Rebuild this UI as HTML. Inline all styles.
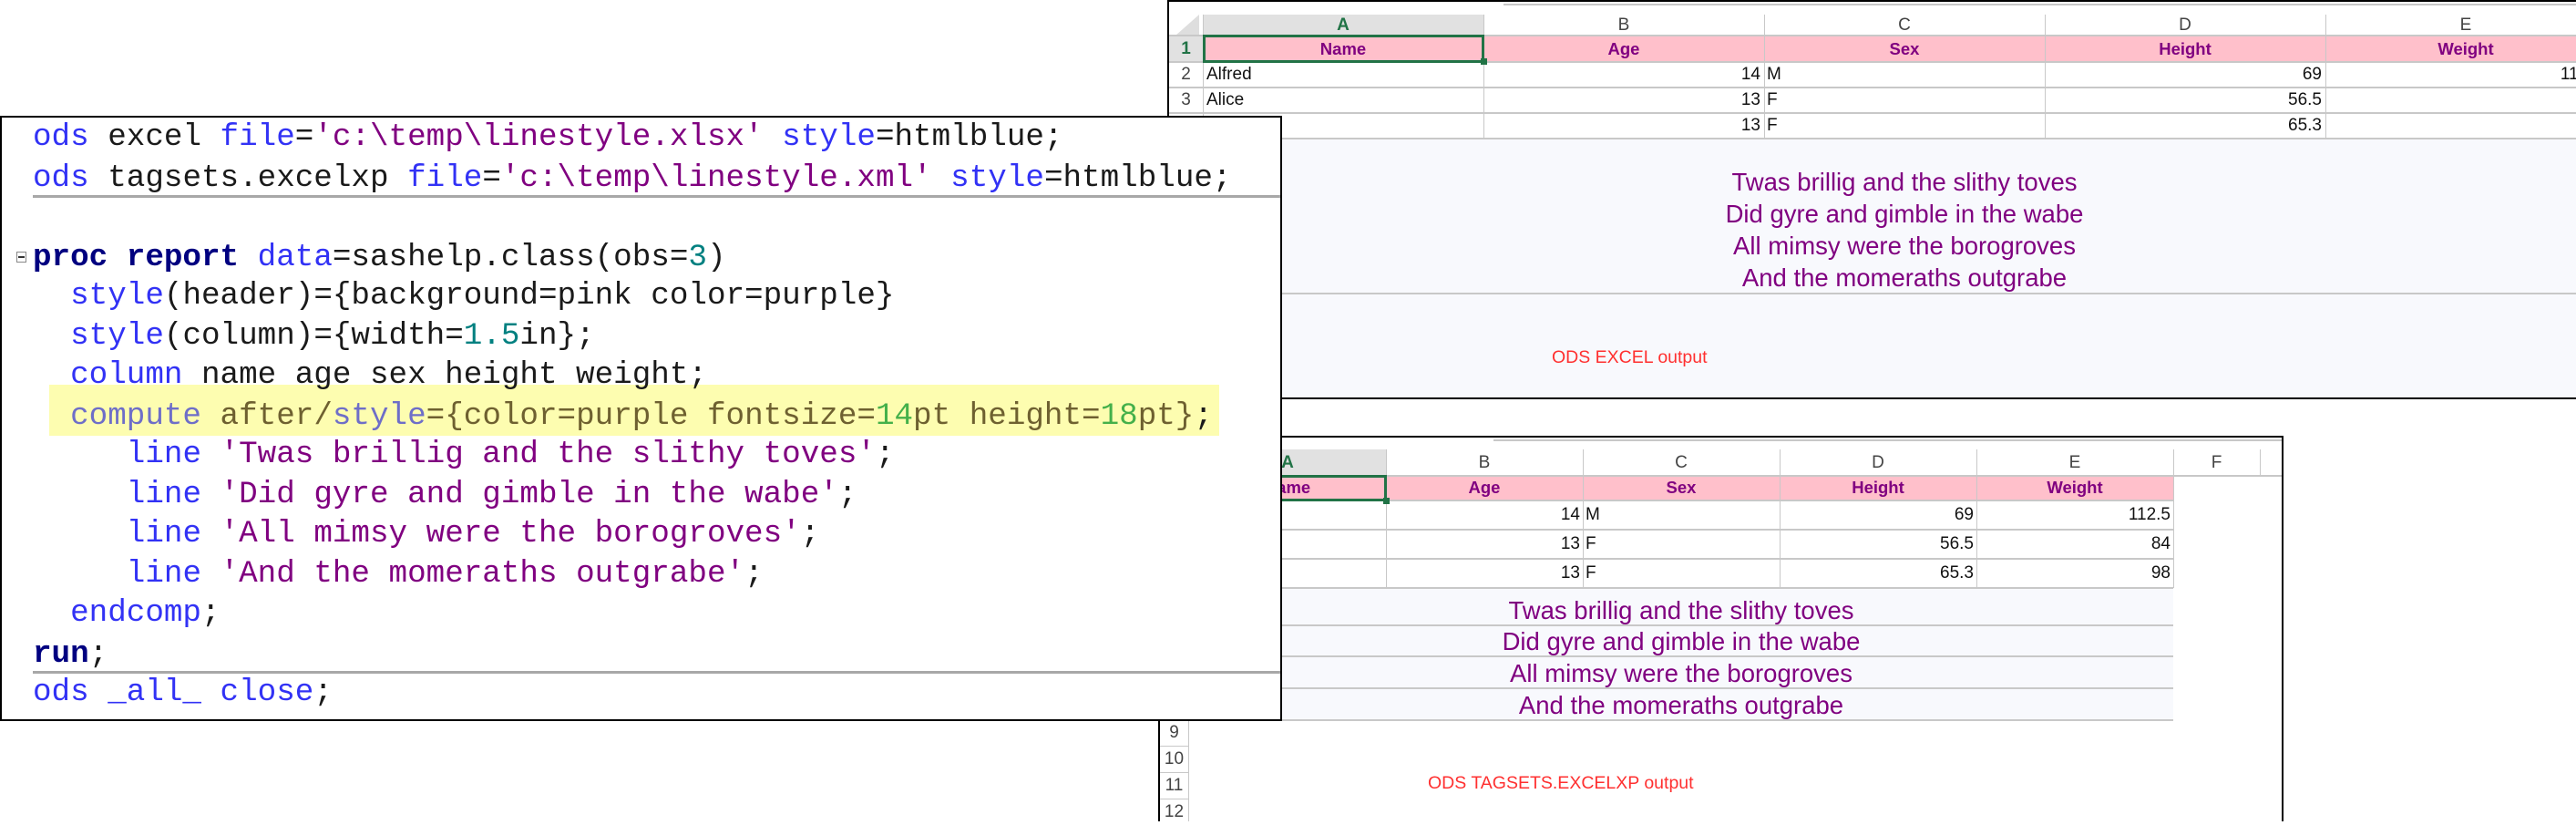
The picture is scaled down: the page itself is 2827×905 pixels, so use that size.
<!DOCTYPE html>
<html><head><meta charset="utf-8"><style>
*{margin:0;padding:0;box-sizing:border-box}
body{width:2827px;height:901px;background:#fff;position:relative;overflow:hidden;font-family:"Liberation Sans",Arial,sans-serif}
.a{position:absolute}
.code{position:absolute;left:0;top:127px;width:1407px;height:664px;border:2px solid #000;background:#fff;z-index:5}
.ln{position:absolute;left:34px;height:44px;line-height:44px;font-family:"Liberation Mono",monospace;font-size:34.25px;color:#1a1a1a;white-space:pre}
.k{color:#3232f5}.s{color:#800080}.n{color:#008080}.b{color:#000080;font-weight:bold}
.hk{color:#6e6ec8}.hb{color:#6e6030}.hn{color:#44b04a}
.sep{position:absolute;left:34px;right:0;height:3px;background:#a8a8a8}
.t{position:absolute;font-size:19px;line-height:28px;white-space:nowrap;color:#111}
.hd{font-weight:bold;color:#800080;text-align:center;font-size:18.5px}
.poem{position:absolute;font-size:27.5px;line-height:32px;color:#800080;text-align:center;white-space:nowrap}
.vl{position:absolute;width:1px;background:#c8c8c8}
.hl{position:absolute;height:2px;background:#c8c8c8}
.cl{position:absolute;font-size:19px;color:#444;text-align:center;line-height:23px}
</style></head><body>

<!-- TOP EXCEL -->
<div class="a" style="left:1281px;top:0;width:1546px;height:438px;border-left:2px solid #000;border-top:2px solid #000;border-bottom:2px solid #000;background:#fff"></div>
<div class="a" style="left:1650px;top:4px;width:1177px;height:2px;background:#c8c8c8"></div>
<div class="a" style="left:1290px;top:16px;width:0;height:0;border-left:26px solid transparent;border-bottom:23px solid #dedede"></div>
<div class="a" style="left:1320px;top:16px;width:308px;height:23px;background:#e1e1e1"></div>
<div class="cl" style="left:1320px;top:16px;width:308px;color:#217346;font-weight:bold">A</div>
<div class="cl" style="left:1628px;top:16px;width:308px">B</div>
<div class="cl" style="left:1936px;top:16px;width:308px">C</div>
<div class="cl" style="left:2244px;top:16px;width:308px">D</div>
<div class="cl" style="left:2552px;top:16px;width:308px">E</div>
<div class="a" style="left:1283px;top:39px;width:37px;height:29px;background:#e1e1e1"></div>
<div class="a" style="left:1320px;top:39px;width:1507px;height:29px;background:#ffc0cb"></div>
<div class="hl" style="left:1283px;top:38px;width:1544px"></div>
<div class="hl" style="left:1283px;top:67px;width:1544px"></div>
<div class="hl" style="left:1283px;top:95px;width:1544px"></div>
<div class="hl" style="left:1283px;top:123px;width:1544px"></div>
<div class="a" style="left:1320px;top:152px;width:1507px;height:284px;background:#f8f9fd"></div>
<div class="hl" style="left:1283px;top:151px;width:1544px"></div>
<div class="hl" style="left:1320px;top:321px;width:1507px"></div>
<div class="vl" style="left:1320px;top:16px;height:136px"></div>
<div class="vl" style="left:1628px;top:16px;height:136px"></div>
<div class="vl" style="left:1936px;top:16px;height:136px"></div>
<div class="vl" style="left:2244px;top:16px;height:136px"></div>
<div class="vl" style="left:2552px;top:16px;height:136px"></div>
<div class="a" style="left:1320px;top:38px;width:309px;height:31px;border:3px solid #217346"></div>
<div class="a" style="left:1625px;top:64px;width:7px;height:7px;background:#217346"></div>
<div class="t" style="left:1283px;top:40px;width:37px;text-align:center;color:#217346;font-weight:bold">1</div>
<div class="t" style="left:1283px;top:68px;width:37px;text-align:center;color:#444">2</div>
<div class="t" style="left:1283px;top:96px;width:37px;text-align:center;color:#444">3</div>
<div class="t hd" style="left:1320px;top:40px;width:308px">Name</div>
<div class="t hd" style="left:1628px;top:40px;width:308px">Age</div>
<div class="t hd" style="left:1936px;top:40px;width:308px">Sex</div>
<div class="t hd" style="left:2244px;top:40px;width:308px">Height</div>
<div class="t hd" style="left:2552px;top:40px;width:308px">Weight</div>
<div class="t" style="left:1324px;top:68px">Alfred</div>
<div class="t" style="left:1324px;top:96px">Alice</div>
<div class="t" style="left:1628px;top:68px;width:304px;text-align:right">14</div>
<div class="t" style="left:1628px;top:96px;width:304px;text-align:right">13</div>
<div class="t" style="left:1628px;top:124px;width:304px;text-align:right">13</div>
<div class="t" style="left:1939px;top:68px">M</div>
<div class="t" style="left:1939px;top:96px">F</div>
<div class="t" style="left:1939px;top:124px">F</div>
<div class="t" style="left:2244px;top:68px;width:304px;text-align:right">69</div>
<div class="t" style="left:2244px;top:96px;width:304px;text-align:right">56.5</div>
<div class="t" style="left:2244px;top:124px;width:304px;text-align:right">65.3</div>
<div class="t" style="left:2552px;top:68px;width:304px;text-align:right">112.5</div>
<div class="t" style="left:2552px;top:96px;width:304px;text-align:right">84</div>
<div class="t" style="left:2552px;top:124px;width:304px;text-align:right">98</div>
<div class="poem" style="left:1320px;width:1540px;top:184px">Twas brillig and the slithy toves</div>
<div class="poem" style="left:1320px;width:1540px;top:219px">Did gyre and gimble in the wabe</div>
<div class="poem" style="left:1320px;width:1540px;top:254px">All mimsy were the borogroves</div>
<div class="poem" style="left:1320px;width:1540px;top:289px">And the momeraths outgrabe</div>
<div class="a" style="left:1703px;top:381px;font-size:19.5px;color:#ff3030;white-space:nowrap">ODS EXCEL output</div>

<!-- BOTTOM EXCEL -->
<div class="a" style="left:1271px;top:478px;width:1235px;height:423px;border:2px solid #000;border-bottom:none;background:#fff"></div>
<div class="a" style="left:1639px;top:482px;width:865px;height:2px;background:#c8c8c8"></div>
<div class="a" style="left:1305px;top:493px;width:216px;height:29px;background:#e1e1e1"></div>
<div class="cl" style="left:1305px;top:496px;width:216px;color:#217346;font-weight:bold">A</div>
<div class="cl" style="left:1521px;top:496px;width:216px">B</div>
<div class="cl" style="left:1737px;top:496px;width:216px">C</div>
<div class="cl" style="left:1953px;top:496px;width:216px">D</div>
<div class="cl" style="left:2169px;top:496px;width:216px">E</div>
<div class="cl" style="left:2385px;top:496px;width:95px">F</div>
<div class="a" style="left:1305px;top:522px;width:1080px;height:27px;background:#ffc0cb"></div>
<div class="hl" style="left:1273px;top:521px;width:1231px"></div>
<div class="hl" style="left:1305px;top:548px;width:1080px"></div>
<div class="hl" style="left:1305px;top:580px;width:1080px"></div>
<div class="hl" style="left:1305px;top:612px;width:1080px"></div>
<div class="a" style="left:1305px;top:645px;width:1080px;height:145px;background:#f8f9fd"></div>
<div class="hl" style="left:1305px;top:644px;width:1080px"></div>
<div class="hl" style="left:1305px;top:685px;width:1080px"></div>
<div class="hl" style="left:1305px;top:719px;width:1080px"></div>
<div class="hl" style="left:1305px;top:754px;width:1080px"></div>
<div class="hl" style="left:1305px;top:789px;width:1080px"></div>
<div class="vl" style="left:1521px;top:493px;height:152px"></div>
<div class="vl" style="left:1737px;top:493px;height:152px"></div>
<div class="vl" style="left:1953px;top:493px;height:152px"></div>
<div class="vl" style="left:2169px;top:493px;height:152px"></div>
<div class="vl" style="left:2385px;top:493px;height:152px"></div>
<div class="vl" style="left:2480px;top:493px;height:29px"></div>
<div class="a" style="left:1299px;top:521px;width:223px;height:29px;border:3px solid #217346"></div>
<div class="a" style="left:1518px;top:546px;width:7px;height:7px;background:#217346"></div>
<div class="t hd" style="left:1305px;top:521px;width:216px">Name</div>
<div class="t hd" style="left:1521px;top:521px;width:216px">Age</div>
<div class="t hd" style="left:1737px;top:521px;width:216px">Sex</div>
<div class="t hd" style="left:1953px;top:521px;width:216px">Height</div>
<div class="t hd" style="left:2169px;top:521px;width:216px">Weight</div>
<div class="t" style="left:1521px;top:551px;width:213px;text-align:right">14</div>
<div class="t" style="left:1521px;top:583px;width:213px;text-align:right">13</div>
<div class="t" style="left:1521px;top:615px;width:213px;text-align:right">13</div>
<div class="t" style="left:1740px;top:551px">M</div>
<div class="t" style="left:1740px;top:583px">F</div>
<div class="t" style="left:1740px;top:615px">F</div>
<div class="t" style="left:1953px;top:551px;width:213px;text-align:right">69</div>
<div class="t" style="left:1953px;top:583px;width:213px;text-align:right">56.5</div>
<div class="t" style="left:1953px;top:615px;width:213px;text-align:right">65.3</div>
<div class="t" style="left:2169px;top:551px;width:213px;text-align:right">112.5</div>
<div class="t" style="left:2169px;top:583px;width:213px;text-align:right">84</div>
<div class="t" style="left:2169px;top:615px;width:213px;text-align:right">98</div>
<div class="poem" style="left:1305px;width:1080px;top:654px">Twas brillig and the slithy toves</div>
<div class="poem" style="left:1305px;width:1080px;top:688px">Did gyre and gimble in the wabe</div>
<div class="poem" style="left:1305px;width:1080px;top:723px">All mimsy were the borogroves</div>
<div class="poem" style="left:1305px;width:1080px;top:758px">And the momeraths outgrabe</div>
<div class="vl" style="left:1304px;top:790px;height:111px"></div>
<div class="hl" style="left:1273px;top:818px;width:31px;height:1px"></div>
<div class="hl" style="left:1273px;top:847px;width:31px;height:1px"></div>
<div class="hl" style="left:1273px;top:876px;width:31px;height:1px"></div>
<div class="t" style="left:1273px;top:790px;width:31px;text-align:center;color:#444">9</div>
<div class="t" style="left:1273px;top:819px;width:31px;text-align:center;color:#444">10</div>
<div class="t" style="left:1273px;top:848px;width:31px;text-align:center;color:#444">11</div>
<div class="t" style="left:1273px;top:877px;width:31px;text-align:center;color:#444">12</div>
<div class="a" style="left:1567px;top:848px;font-size:19.5px;color:#ff3030;white-space:nowrap">ODS TAGSETS.EXCELXP output</div>

<!-- CODE WINDOW -->
<div class="code">
<div class="a" style="left:52px;top:293px;width:1284px;height:56px;background:#fdfdb0"></div>
<div class="sep" style="top:85px"></div>
<div class="sep" style="top:607px"></div>
<div class="a" style="left:16px;top:147px;width:11px;height:12px;border:1px solid #888;background:#fff"></div>
<div class="a" style="left:18px;top:152px;width:7px;height:2px;background:#333"></div>
<div class="ln" style="top:0px"><span class="k">ods</span> excel <span class="k">file</span>=<span class="s">'c:\temp\linestyle.xlsx'</span> <span class="k">style</span>=htmlblue;</div>
<div class="ln" style="top:45px"><span class="k">ods</span> tagsets.excelxp <span class="k">file</span>=<span class="s">'c:\temp\linestyle.xml'</span> <span class="k">style</span>=htmlblue;</div>
<div class="ln" style="top:132px"><span class="b">proc report</span> <span class="k">data</span>=sashelp.class(obs=<span class="n">3</span>)</div>
<div class="ln" style="top:174px">  <span class="k">style</span>(header)={background=pink color=purple}</div>
<div class="ln" style="top:218px">  <span class="k">style</span>(column)={width=<span class="n">1.5</span>in};</div>
<div class="ln" style="top:261px">  <span class="k">column</span> name age sex height weight;</div>
<div class="ln" style="top:306px">  <span class="hk">compute</span> <span class="hb">after/</span><span class="hk">style</span><span class="hb">={color=purple fontsize=</span><span class="hn">14</span><span class="hb">pt height=</span><span class="hn">18</span><span class="hb">pt}</span>;</div>
<div class="ln" style="top:348px">     <span class="k">line</span> <span class="s">'Twas brillig and the slithy toves'</span>;</div>
<div class="ln" style="top:392px">     <span class="k">line</span> <span class="s">'Did gyre and gimble in the wabe'</span>;</div>
<div class="ln" style="top:435px">     <span class="k">line</span> <span class="s">'All mimsy were the borogroves'</span>;</div>
<div class="ln" style="top:479px">     <span class="k">line</span> <span class="s">'And the momeraths outgrabe'</span>;</div>
<div class="ln" style="top:522px">  <span class="k">endcomp</span>;</div>
<div class="ln" style="top:567px"><span class="b">run</span>;</div>
<div class="ln" style="top:609px"><span class="k">ods _all_ close</span>;</div>
</div>
</body></html>
